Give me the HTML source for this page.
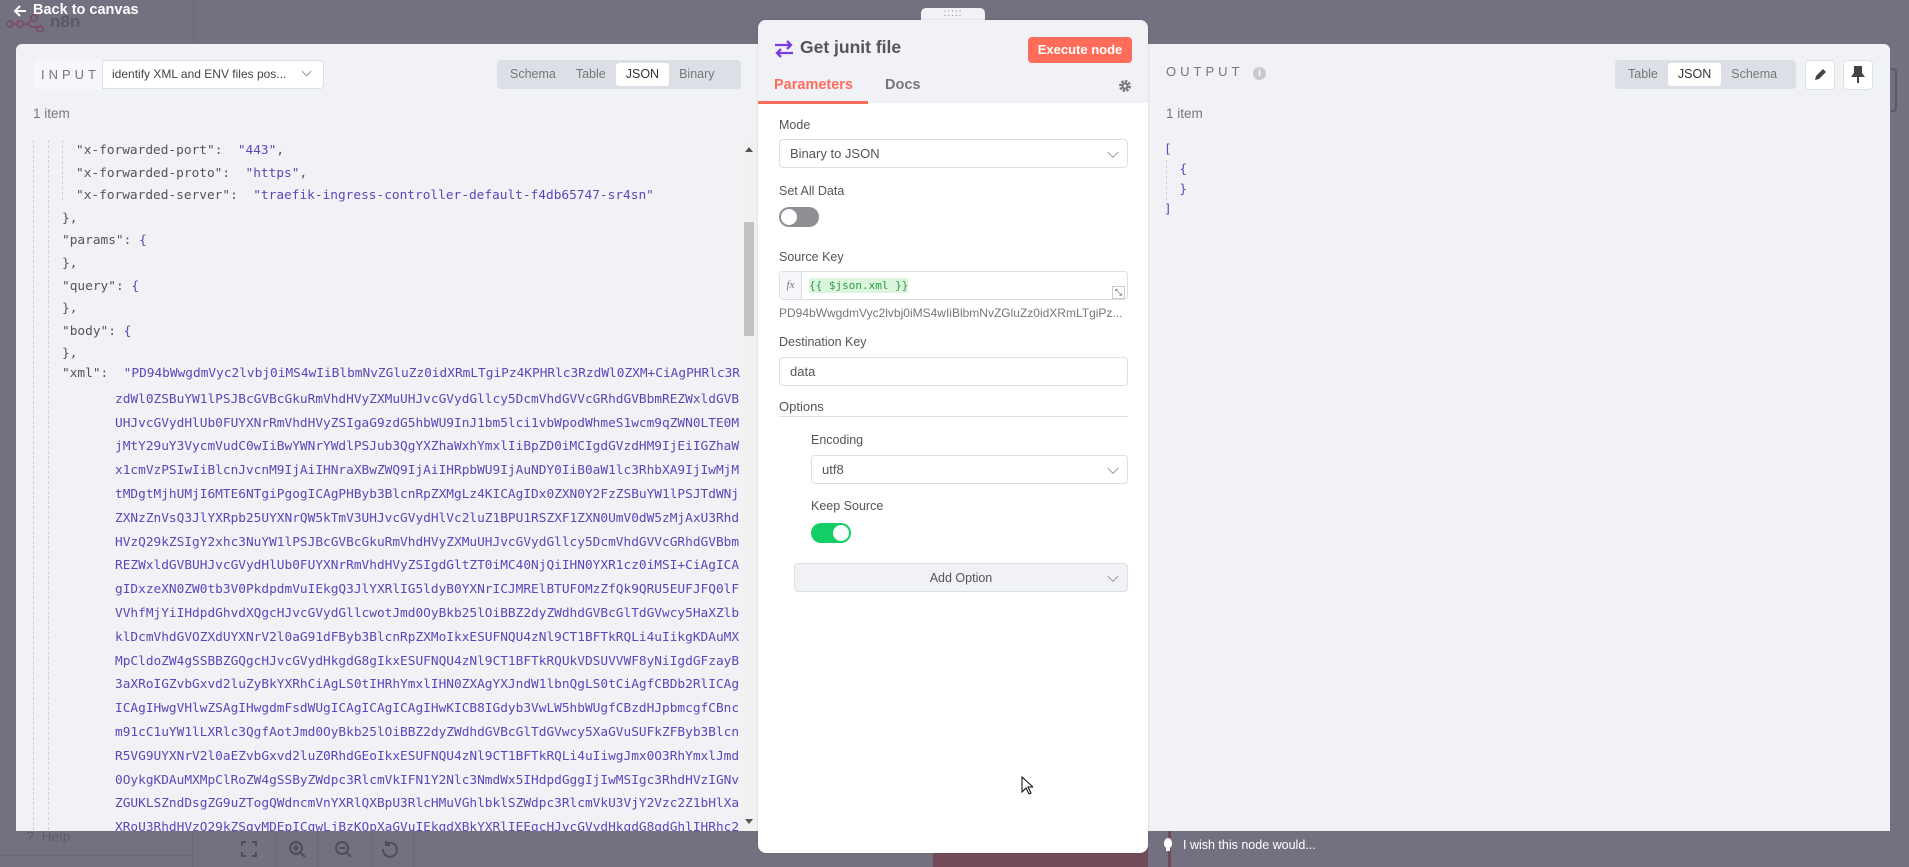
<!DOCTYPE html>
<html><head><meta charset="utf-8">
<style>
*{box-sizing:border-box;margin:0;padding:0}
body{width:1909px;height:867px;overflow:hidden;background:#737080;font-family:"Liberation Sans",sans-serif;position:relative;color:#555}
.a{position:absolute}
.mono{font-family:"DejaVu Sans Mono","Liberation Mono",monospace;font-size:12.8px;white-space:pre;line-height:20px}
.k{color:#555}
.s{color:#5a48b8}
.lbl{position:absolute;font-size:12.5px;color:#555}
.inp{position:absolute;background:#fff;border:1px solid #dbdfe7;border-radius:4px;font-size:13px;color:#555;padding-left:10px;display:flex;align-items:center}
.chev{position:absolute;right:10px;top:50%;width:8px;height:8px;border-right:1.3px solid #999;border-bottom:1.3px solid #999;transform:translateY(-70%) rotate(45deg)}
.tabs{position:absolute;background:#dcdfe6;border-radius:4px;height:29px;display:flex;align-items:center;padding:0 3px;font-size:12.5px;color:#777}
.tabs span{padding:0 10px;height:23px;line-height:23px;border-radius:3px}
.tabs span.on{background:#fff;color:#333}
.vd{position:absolute;border-left:1px dashed #cfd2da}
</style></head><body>

<div class="a" style="left:193px;top:0;width:1px;height:44px;background:#6a6877"></div>
<svg class="a" style="left:6px;top:12px" width="42" height="20" viewBox="0 0 42 20"><g fill="none" stroke="#7a4f6a" stroke-width="2"><circle cx="4" cy="12" r="3"/><circle cx="14" cy="12" r="3"/><circle cx="28" cy="6" r="3"/><circle cx="34" cy="17" r="3"/><path d="M7 12h4M17 12h5l4-5M22 12l3 3h6"/></g></svg>
<div class="a" style="left:50px;top:12px;font-size:17px;font-weight:bold;color:#5a5868">n8n</div>
<svg class="a" style="left:12px;top:3px" width="16" height="16" viewBox="0 0 16 16"><path d="M14 8H3M8 3L3 8l5 5" stroke="#fff" stroke-width="2" fill="none"/></svg>
<div class="a" style="left:33px;top:2px;font-size:14.5px;font-weight:bold;color:#fff">Back to canvas</div>
<div class="a" style="left:1891px;top:68px;width:6px;height:44px;border:2px solid #5c5a69;border-left:none;border-radius:0 4px 4px 0"></div>

<div class="a" style="left:0;top:855px;width:193px;height:1px;background:#6a6877"></div>
<div class="a" style="left:192px;top:831px;width:1px;height:36px;background:#6a6877"></div>
<div class="a" style="left:276px;top:831px;width:1px;height:36px;background:#6a6877"></div>
<div class="a" style="left:317px;top:831px;width:1px;height:36px;background:#6a6877"></div>
<div class="a" style="left:372px;top:831px;width:1px;height:36px;background:#6a6877"></div>
<div class="a" style="left:413px;top:831px;width:1px;height:36px;background:#6a6877"></div>
<div class="a" style="left:26px;top:828px;font-size:14px;color:#5e5c6c">? &nbsp;Help</div>
<svg class="a" style="left:240px;top:840px" width="170" height="20" viewBox="0 0 170 20" fill="none" stroke="#4f4d5c" stroke-width="2"><path d="M2 6V2h4M12 2h4v4M16 12v4h-4M6 16H2v-4"/><circle cx="56" cy="8" r="6"/><path d="M60 12l5 5M53 8h6M56 5v6"/><circle cx="102" cy="8" r="6"/><path d="M106 12l5 5M99 8h6"/><path d="M146 4a7 7 0 1 1-3 5M146 1v4h4"/></svg>
<div class="a" style="left:933px;top:831px;width:238px;height:36px;background:#724b59"></div>
<div class="a" style="left:1148px;top:831px;width:20px;height:36px;background:#737080"></div>
<div class="a" style="left:1164px;top:838px;width:8px;height:10px;border-radius:50% 50% 40% 40%;background:#fff"></div>
<div class="a" style="left:1166px;top:848px;width:4px;height:3px;background:#fff"></div>
<div class="a" style="left:1183px;top:838px;font-size:12.5px;color:#fff">I wish this node would...</div>

<div class="a" style="left:16px;top:44px;width:1874px;height:787px;background:#f1f2f6;border-radius:6px 6px 0 0;overflow:hidden"></div>

<div class="a" style="left:33px;top:60px;width:291px;height:29px;background:#fff;border:1px solid #dbdfe7;border-radius:4px"></div>
<div class="a" style="left:33px;top:60px;width:70px;height:29px;border-right:1px solid #dbdfe7;background:#f6f7fa;border-radius:4px 0 0 4px;font-size:13px;letter-spacing:4px;color:#777;line-height:29px;padding-left:8px">INPUT</div>
<div class="a" style="left:112px;top:60px;font-size:12px;color:#444;line-height:29px">identify XML and ENV files pos...</div>
<div class="a" style="left:303px;top:68px;width:7px;height:7px;border-right:1.2px solid #999;border-bottom:1.2px solid #999;transform:rotate(45deg)"></div>
<div class="tabs" style="left:497px;top:60px;width:244px"><span>Schema</span><span>Table</span><span class="on">JSON</span><span>Binary</span></div>
<div class="a" style="left:33px;top:106px;font-size:13.5px;color:#777">1 item</div>

<div class="a" style="left:16px;top:140px;width:741px;height:691px;overflow:hidden">
<div class="vd" style="left:17px;top:0;height:700px"></div>
<div class="vd" style="left:32px;top:0;height:700px"></div>
<div class="vd" style="left:46px;top:0;height:60px"></div>
<div class="a mono" style="left:60px;top:1px"><span class="k">"x-forwarded-port"</span>:  <span class="s">"443"</span>,</div>
<div class="a mono" style="left:60px;top:23.6px"><span class="k">"x-forwarded-proto"</span>:  <span class="s">"https"</span>,</div>
<div class="a mono" style="left:60px;top:46.2px"><span class="k">"x-forwarded-server"</span>:  <span class="s">"traefik-ingress-controller-default-f4db65747-sr4sn"</span></div>
<div class="a mono" style="left:46px;top:68.8px">},</div>
<div class="a mono" style="left:46px;top:91.4px"><span class="k">"params"</span>: <span class="s">{</span></div>
<div class="a mono" style="left:46px;top:114px">},</div>
<div class="a mono" style="left:46px;top:136.6px"><span class="k">"query"</span>: <span class="s">{</span></div>
<div class="a mono" style="left:46px;top:159.2px">},</div>
<div class="a mono" style="left:46px;top:181.8px"><span class="k">"body"</span>: <span class="s">{</span></div>
<div class="a mono" style="left:46px;top:204.4px">},</div>
<div class="a mono" style="left:46px;top:224px"><span class="k">"xml"</span>:  <span class="s">"PD94bWwgdmVyc2lvbj0iMS4wIiBlbmNvZGluZz0idXRmLTgiPz4KPHRlc3RzdWl0ZXM+CiAgPHRlc3R</span></div>
<div class="a mono s" style="left:99px;top:247.8px;line-height:23.8px">zdWl0ZSBuYW1lPSJBcGVBcGkuRmVhdHVyZXMuUHJvcGVydGllcy5DcmVhdGVVcGRhdGVBbmREZWxldGVB
UHJvcGVydHlUb0FUYXNrRmVhdHVyZSIgaG9zdG5hbWU9InJ1bm5lci1vbWpodWhmeS1wcm9qZWN0LTE0M
jMtY29uY3VycmVudC0wIiBwYWNrYWdlPSJub3QgYXZhaWxhYmxlIiBpZD0iMCIgdGVzdHM9IjEiIGZhaW
x1cmVzPSIwIiBlcnJvcnM9IjAiIHNraXBwZWQ9IjAiIHRpbWU9IjAuNDY0IiB0aW1lc3RhbXA9IjIwMjM
tMDgtMjhUMjI6MTE6NTgiPgogICAgPHByb3BlcnRpZXMgLz4KICAgIDx0ZXN0Y2FzZSBuYW1lPSJTdWNj
ZXNzZnVsQ3JlYXRpb25UYXNrQW5kTmV3UHJvcGVydHlVc2luZ1BPU1RSZXF1ZXN0UmV0dW5zMjAxU3Rhd
HVzQ29kZSIgY2xhc3NuYW1lPSJBcGVBcGkuRmVhdHVyZXMuUHJvcGVydGllcy5DcmVhdGVVcGRhdGVBbm
REZWxldGVBUHJvcGVydHlUb0FUYXNrRmVhdHVyZSIgdGltZT0iMC40NjQiIHN0YXR1cz0iMSI+CiAgICA
gIDxzeXN0ZW0tb3V0PkdpdmVuIEkgQ3JlYXRlIG5ldyB0YXNrICJMRElBTUFOMzZfQk9QRU5EUFJFQ0lF
VVhfMjYiIHdpdGhvdXQgcHJvcGVydGllcwotJmd0OyBkb25lOiBBZ2dyZWdhdGVBcGlTdGVwcy5HaXZlb
klDcmVhdGVOZXdUYXNrV2l0aG91dFByb3BlcnRpZXMoIkxESUFNQU4zNl9CT1BFTkRQLi4uIikgKDAuMX
MpCldoZW4gSSBBZGQgcHJvcGVydHkgdG8gIkxESUFNQU4zNl9CT1BFTkRQUkVDSUVVWF8yNiIgdGFzayB
3aXRoIGZvbGxvd2luZyBkYXRhCiAgLS0tIHRhYmxlIHN0ZXAgYXJndW1lbnQgLS0tCiAgfCBDb2RlICAg
ICAgIHwgVHlwZSAgIHwgdmFsdWUgICAgICAgICAgIHwKICB8IGdyb3VwLW5hbWUgfCBzdHJpbmcgfCBnc
m91cC1uYW1lLXRlc3QgfAotJmd0OyBkb25lOiBBZ2dyZWdhdGVBcGlTdGVwcy5XaGVuSUFkZFByb3Blcn
R5VG9UYXNrV2l0aEZvbGxvd2luZ0RhdGEoIkxESUFNQU4zNl9CT1BFTkRQLi4uIiwgJmx0O3RhYmxlJmd
0OykgKDAuMXMpClRoZW4gSSByZWdpc3RlcmVkIFN1Y2Nlc3NmdWx5IHdpdGggIjIwMSIgc3RhdHVzIGNv
ZGUKLSZndDsgZG9uZTogQWdncmVnYXRlQXBpU3RlcHMuVGhlbklSZWdpc3RlcmVkU3VjY2Vzc2Z1bHlXa
XRoU3RhdHVzQ29kZSgyMDEpICgwLjBzKQpXaGVuIEkgdXBkYXRlIEEgcHJvcGVydHkgdG8gdGhlIHRhc2</div>
</div>
<div class="a" style="left:742px;top:140px;width:14px;height:691px;background:#f1f1f1"></div>
<div class="a" style="left:744px;top:222px;width:10px;height:114px;background:#c1c1c1"></div>
<div class="a" style="left:745px;top:147px;width:0;height:0;border-left:4px solid transparent;border-right:4px solid transparent;border-bottom:5px solid #555"></div>
<div class="a" style="left:745px;top:819px;width:0;height:0;border-left:4px solid transparent;border-right:4px solid transparent;border-top:5px solid #555"></div>

<div class="a" style="left:1166px;top:64px;font-size:13px;letter-spacing:4px;color:#777">OUTPUT</div>
<div class="a" style="left:1253px;top:67px;width:13px;height:13px;border-radius:50%;background:#c8c9cd;color:#fff;font-size:10px;font-weight:bold;text-align:center;line-height:13px">i</div>
<div class="tabs" style="left:1615px;top:60px;width:181px"><span>Table</span><span class="on">JSON</span><span>Schema</span></div>
<div class="a" style="left:1805px;top:60px;width:30px;height:30px;background:#fff;border:1px solid #dbdfe7;border-radius:4px"></div>
<svg class="a" style="left:1812px;top:67px" width="16" height="16" viewBox="0 0 16 16"><path d="M3 13l1-4 7-7 3 3-7 7z" fill="#444"/></svg>
<div class="a" style="left:1843px;top:60px;width:30px;height:30px;background:#fff;border:1px solid #dbdfe7;border-radius:4px"></div>
<svg class="a" style="left:1851px;top:66px" width="14" height="18" viewBox="0 0 14 18"><path d="M3 1h8M4 1v6L2 10h10L10 7V1M7 10v7" stroke="#444" stroke-width="2" fill="#444"/></svg>
<div class="a" style="left:1166px;top:106px;font-size:13.5px;color:#777">1 item</div>
<div class="vd" style="left:1166px;top:160px;height:40px"></div>
<div class="a mono s" style="left:1164px;top:140px;line-height:20px">[
  {
  }
]</div>

<div class="a" style="left:921px;top:8px;width:64px;height:16px;background:#f1f2f6;border-radius:5px 5px 0 0;font-size:10px;color:#888;text-align:center;letter-spacing:1px;line-height:12px">:::::</div>
<div class="a" style="left:758px;top:20px;width:390px;height:833px;background:#fff;border-radius:8px;box-shadow:0 0 2px rgba(0,0,0,.15);overflow:hidden">
  <div class="a" style="left:0;top:0;width:390px;height:83px;background:#f1f2f6"></div>
  <svg class="a" style="left:16px;top:20px" width="20" height="18" viewBox="0 0 20 18"><path d="M1 5h16M13 1l4 4-4 4M19 13H3M7 9l-4 4 4 4" stroke="#7a3ee0" stroke-width="2.3" fill="none"/></svg>
  <div class="a" style="left:42px;top:17px;font-size:17.5px;color:#555;font-weight:600">Get junit file</div>
  <div class="a" style="left:270px;top:17px;width:104px;height:26px;background:#ff6d5a;border-radius:4px;color:#fff;font-size:13px;font-weight:600;text-align:center;line-height:26px">Execute node</div>
  <div class="a" style="left:16px;top:57px;font-size:14.5px;color:#ff6d5a;font-weight:600">Parameters</div>
  <div class="a" style="left:127px;top:57px;font-size:14.5px;color:#777;font-weight:600">Docs</div>
  <div class="a" style="left:0;top:81px;width:110px;height:3px;background:#ff6d5a"></div>
  <svg class="a" style="left:360px;top:59px" width="14" height="14" viewBox="0 0 14 14"><circle cx="7" cy="7" r="4.5" fill="none" stroke="#777" stroke-width="3" stroke-dasharray="2.2 1.3"/><circle cx="7" cy="7" r="3.5" fill="#777"/><circle cx="7" cy="7" r="1.5" fill="#f1f2f6"/></svg>

  <div class="lbl" style="left:21px;top:98px">Mode</div>
  <div class="inp" style="left:21px;top:119px;width:349px;height:29px">Binary to JSON<div class="chev"></div></div>
  <div class="lbl" style="left:21px;top:164px">Set All Data</div>
  <div class="a" style="left:21px;top:187px;width:40px;height:20px;border-radius:10px;background:#8e8e94"></div>
  <div class="a" style="left:23px;top:189px;width:16px;height:16px;border-radius:50%;background:#fff"></div>
  <div class="lbl" style="left:21px;top:230px">Source Key</div>
  <div class="inp" style="left:21px;top:251px;width:349px;height:29px;padding-left:0">
    <div style="width:22px;height:27px;border-right:1px solid #dbdfe7;background:#f6f7fa;font-family:'Liberation Serif',serif;font-style:italic;font-size:11px;color:#777;text-align:center;line-height:26px">fx</div>
    <span style="margin-left:7px;font-family:'DejaVu Sans Mono',monospace;font-size:11px;color:#2b9a4a;background:#dcf5dd;padding:1px 0">{{ $json.xml }}</span>
  </div>
  <div class="a" style="left:354px;top:266px;width:13px;height:13px;border:1px solid #ccc;background:#fff;font-size:9px;line-height:11px;text-align:center;color:#555">⤡</div>
  <div class="lbl" style="left:21px;top:286px;color:#777;font-size:12px">PD94bWwgdmVyc2lvbj0iMS4wIiBlbmNvZGluZz0idXRmLTgiPz...</div>
  <div class="lbl" style="left:21px;top:315px">Destination Key</div>
  <div class="inp" style="left:21px;top:337px;width:349px;height:29px">data</div>
  <div class="lbl" style="left:21px;top:379px;font-size:13px">Options</div>
  <div class="a" style="left:21px;top:396px;width:349px;height:1px;background:#dbdfe7"></div>
  <div class="lbl" style="left:53px;top:413px">Encoding</div>
  <div class="inp" style="left:53px;top:435px;width:317px;height:29px">utf8<div class="chev"></div></div>
  <div class="lbl" style="left:53px;top:479px">Keep Source</div>
  <div class="a" style="left:53px;top:503px;width:40px;height:20px;border-radius:10px;background:#13ce66"></div>
  <div class="a" style="left:75px;top:505px;width:16px;height:16px;border-radius:50%;background:#fff"></div>
  <div class="inp" style="left:36px;top:543px;width:334px;height:29px;background:#f1f2f6;justify-content:center;padding:0;font-size:12.5px">Add Option<div class="chev"></div></div>
</div>
<svg class="a" style="left:1021px;top:776px" width="12" height="20" viewBox="0 0 12 20"><path d="M1 1v15l4-4 3 6 2-1-3-6h5z" fill="#fff" stroke="#000" stroke-width="1"/></svg>
</body></html>
